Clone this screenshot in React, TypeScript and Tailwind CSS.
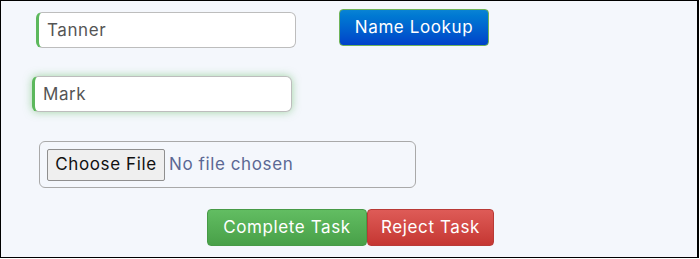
export default function App() {
  const font = { fontFamily: "Inter, 'Open Sans', sans-serif" };
  return (
    <div className="w-[700px] h-[259px] bg-white" style={font}>
      <div className="w-[699px] h-[258px] border border-black border-r-2 bg-[#f4f7fc] tracking-[0.6px]">
        <div className="flex items-start pt-[8px] pl-[35px]">
          <input
            defaultValue="Tanner"
            className="mt-[3px] w-[260px] h-[36px] rounded-[6px] border border-[#bdbdbd] border-l-[3px] border-l-[#5cb85c] bg-white pl-[8px] text-[17px] text-[#555] outline-none tracking-[0.6px]"
          />
          <button className="ml-[43px] w-[150px] h-[37px] rounded-[4px] border border-[#6fb35a] bg-gradient-to-b from-[#0a83d4] to-[#0041c9] text-white text-[17px]">
            Name Lookup
          </button>
        </div>
        <div className="pl-[31px] mt-[28px]">
          <input
            defaultValue="Mark"
            className="w-[260px] h-[36px] rounded-[6px] border border-[#bdbdbd] border-l-[3px] border-l-[#5cb85c] bg-white pl-[8px] text-[17px] text-[#555] outline-none tracking-[0.6px] shadow-[0_0_8px_rgba(92,184,92,0.55)]"
          />
        </div>
        <div className="pl-[38px] mt-[29px]">
          <div className="w-[377px] h-[47px] rounded-[6px] border border-[#a9a9a9] flex items-center pl-[7px]">
            <span className="w-[118px] h-[32px] flex items-center justify-center bg-[#efefef] border border-[#8f8f8f] rounded-[2px] text-[17px] text-[#111]">
              Choose File
            </span>
            <span className="ml-[4px] text-[17px] text-[#5b6894]">No file chosen</span>
          </div>
        </div>
        <div className="flex justify-center mt-[21px] pl-[3px]">
          <button className="w-[160px] h-[37px] rounded-[4px] border border-[#479a47] bg-gradient-to-b from-[#62bd62] to-[#48a048] text-white text-[17px]">
            Complete Task
          </button>
          <button className="w-[127px] h-[37px] rounded-[4px] border border-[#b93a36] bg-gradient-to-b from-[#de5b57] to-[#c53632] text-white text-[17px]">
            Reject Task
          </button>
        </div>
      </div>
    </div>
  );
}
